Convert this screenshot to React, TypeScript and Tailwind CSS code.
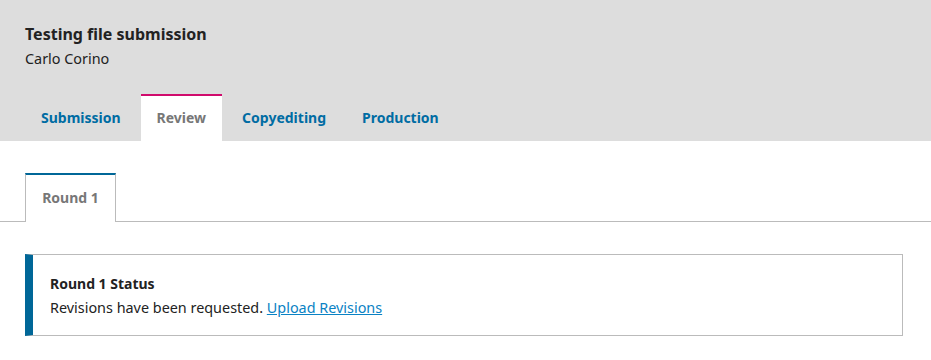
export default function App() {
  const tabs = ["Submission", "Review", "Copyediting", "Production"];
  return (
    <div className="w-[931px] h-[360px] bg-white text-[#222] overflow-hidden" style={{ fontFamily: '"Noto Sans", sans-serif' }}>
      <div className="bg-[#ddd] pt-[23px] px-[25px]">
        <h1 className="text-[16px] font-bold leading-[22px] m-0">Testing file submission</h1>
        <div className="text-[14.4px] leading-[20px] mt-[4px]">Carlo Corino</div>
        <div className="flex gap-[4px] mt-[25px]">
          {tabs.map((t) => (
            <div
              key={t}
              className={
                t === "Review"
                  ? "px-[16px] h-[47px] flex items-center text-[14px] font-bold bg-white text-[#777] border-t-2 border-[#d00a6c] pb-[2px]"
                  : "px-[16px] h-[47px] flex items-center text-[14px] font-bold text-[#006ca3] border-t-2 border-transparent pb-[2px]"
              }
            >
              {t}
            </div>
          ))}
        </div>
      </div>
      <div className="pt-[32px]">
        <div className="flex border-b border-[#bbb] px-[25px]">
          <div className="w-[91px] h-[49px] -mb-px bg-white border-t-2 border-t-[#006798] border-x border-x-[#bbb] flex items-center justify-center text-[14px] font-bold text-[#777] pb-[2px]">
            Round 1
          </div>
        </div>
        <div className="px-[25px] pt-[32px] pr-[28px]">
          <div className="border border-[#bbb] border-l-[8px] border-l-[#006798] pl-[17px] pt-[18px] pb-[16px] h-[82px]">
            <div className="text-[14px] font-bold leading-[22px]">Round 1 Status</div>
            <div className="text-[14.4px] leading-[22px] mt-[2px]">
              Revisions have been requested.{" "}
              <a href="#" className="text-[#0a82c4] underline">Upload Revisions</a>
            </div>
          </div>
        </div>
      </div>
    </div>
  );
}
